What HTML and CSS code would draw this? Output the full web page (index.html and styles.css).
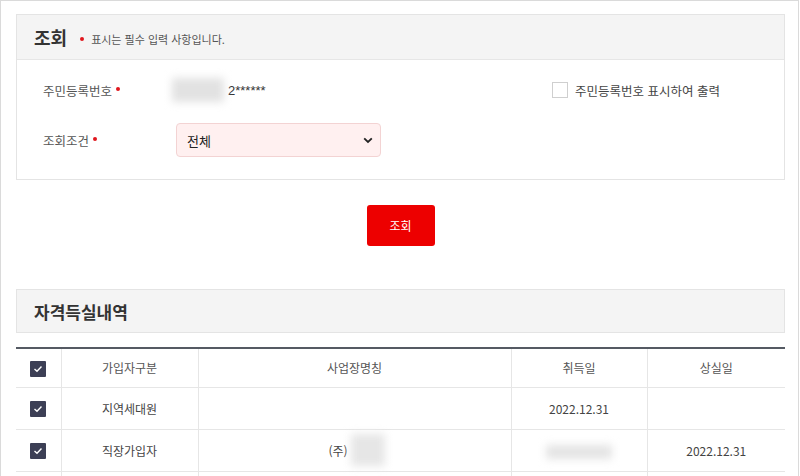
FILE: index.html
```html
<!DOCTYPE html>
<html lang="ko">
<head>
<meta charset="utf-8">
<link rel="stylesheet" href="styles.css">
</head>
<body>
<div class="frame">
  <section class="panel">
    <div class="panel-head">
      <h2 class="title">조회</h2>
      <span class="note"><span class="dot"></span>표시는 필수 입력 사항입니다.</span>
    </div>
    <div class="panel-body">
      <div class="row">
        <div class="label">주민등록번호 <span class="dot"></span></div>
        <div class="value"><span class="blur blur-id"></span><span class="id-tail">2******</span></div>
        <label class="check-group"><span class="box"></span>주민등록번호 표시하여 출력</label>
      </div>
      <div class="row">
        <div class="label">조회조건 <span class="dot"></span></div>
        <div class="value">
          <div class="select"><span>전체</span>
            <svg class="chev" width="10" height="7" viewBox="0 0 10 7"><path d="M1.2 1.3 L5 5 L8.8 1.3" fill="none" stroke="#222" stroke-width="1.8"/></svg>
          </div>
        </div>
      </div>
    </div>
  </section>

  <div class="actions"><button class="btn">조회</button></div>

  <section class="section-head"><h2 class="title title-2">자격득실내역</h2></section>

  <table class="grid">
    <colgroup>
      <col class="c1"><col class="c2"><col class="c3"><col class="c4"><col class="c5">
    </colgroup>
    <thead>
      <tr>
        <th><span class="cb"><svg width="10" height="8" viewBox="0 0 10 8"><path d="M1.5 4 L4 6.3 L8.5 1.6" fill="none" stroke="#fff" stroke-width="1.4"/></svg></span></th>
        <th>가입자구분</th>
        <th>사업장명칭</th>
        <th>취득일</th>
        <th>상실일</th>
      </tr>
    </thead>
    <tbody>
      <tr>
        <td><span class="cb"><svg width="10" height="8" viewBox="0 0 10 8"><path d="M1.5 4 L4 6.3 L8.5 1.6" fill="none" stroke="#fff" stroke-width="1.4"/></svg></span></td>
        <td>지역세대원</td>
        <td></td>
        <td>2022.12.31</td>
        <td></td>
      </tr>
      <tr>
        <td><span class="cb"><svg width="10" height="8" viewBox="0 0 10 8"><path d="M1.5 4 L4 6.3 L8.5 1.6" fill="none" stroke="#fff" stroke-width="1.4"/></svg></span></td>
        <td>직장가입자</td>
        <td><span class="corp">(주)<span class="blur blur-corp"></span></span></td>
        <td><span class="blur blur-date"></span></td>
        <td>2022.12.31</td>
      </tr>
      <tr>
        <td></td><td></td><td></td><td></td><td></td>
      </tr>
    </tbody>
  </table>
</div>
</body>
</html>
```

FILE: styles.css
```css
* { box-sizing: border-box; }
html, body { margin: 0; padding: 0; background: #fff; }
body {
  font-family: "Noto Sans CJK KR", "Noto Sans", sans-serif;
  color: #444;
  overflow: hidden;
}
.frame {
  width: 799px;
  height: 477px;
  border: 1px solid #dadada;
  padding: 13px 13px 0 15px;
  overflow: hidden;
}
.panel {
  border: 1px solid #e4e4e4;
}
.panel-head {
  height: 45px;
  background: #f4f4f4;
  border-bottom: 1px solid #e6e6e6;
  display: flex;
  align-items: center;
  padding-left: 17px;
}
.title {
  margin: 0;
  font-size: 18px;
  font-weight: 700;
  color: #333;
  line-height: 1;
}
.note {
  display: flex;
  align-items: center;
  margin-left: 13px;
  font-size: 11px;
  color: #555;
  padding-top: 3px;
}
.dot {
  display: inline-block;
  width: 4px;
  height: 4px;
  border-radius: 50%;
  background: #e0161d;
  margin-right: 7px;
  vertical-align: middle;
}
.panel-body {
  padding: 13px 0 22px;
  display: flex;
  flex-direction: column;
  gap: 16px;
}
.row {
  display: flex;
  align-items: center;
  min-height: 34px;
  padding-left: 26px;
}
.label {
  width: 133px;
  font-size: 12.5px;
  color: #555;
  display: flex;
  align-items: center;
  gap: 4px;
}
.label .dot { margin: 0; position: relative; top: -1px; }
.value {
  flex: 1;
  display: flex;
  align-items: center;
  font-size: 13px;
  color: #333;
}
.blur {
  display: inline-block;
  background: #dedede;
  filter: blur(4px);
}
.blur-id {
  width: 52px;
  height: 24px;
  margin-left: -4px;
  margin-right: 4px;
  background: #e2e2e2;
}
.id-tail {
  font-family: "Liberation Sans", Arial, sans-serif;
  font-size: 13px;
  color: #333;
}
.check-group {
  width: 232px;
  display: flex;
  align-items: center;
  gap: 7px;
  font-size: 12.5px;
  color: #444;
}
.box {
  width: 16px;
  height: 16px;
  border: 1px solid #cfcfcf;
  background: #fff;
}
.select {
  width: 205px;
  height: 34px;
  border: 1px solid #f3d3d3;
  background: #fff0f0;
  border-radius: 4px;
  display: flex;
  align-items: center;
  justify-content: space-between;
  padding: 0 7px 0 10px;
  font-size: 13px;
  color: #222;
}
.actions {
  display: flex;
  justify-content: center;
  padding-top: 25px;
}
.btn {
  width: 68px;
  height: 41px;
  border: none;
  border-radius: 3px;
  background: #ed0000;
  color: #fff;
  font-family: inherit;
  font-size: 12px;
  padding: 0;
}
.section-head {
  margin-top: 43px;
  height: 44px;
  background: #f4f4f4;
  border: 1px solid #e4e4e4;
  display: flex;
  align-items: center;
  padding-left: 17px;
}
.title-2 { font-size: 17px; }
.grid {
  margin-top: 14px;
  width: 769px;
  border-collapse: collapse;
  table-layout: fixed;
  border-top: 2px solid #555a63;
}
.c1 { width: 45px; }
.c2 { width: 137px; }
.c3 { width: 313px; }
.c4 { width: 136px; }
.c5 { width: 138px; }
.grid th, .grid td {
  border-bottom: 1px solid #e6e6e6;
  border-left: 1px solid #e6e6e6;
  text-align: center;
  font-size: 12px;
  font-weight: 400;
  color: #555;
  padding: 0;
}
.grid th:first-child, .grid td:first-child { border-left: none; }
.grid th { height: 39px; }
.grid td { height: 42px; color: #444; }
.cb {
  display: inline-flex;
  align-items: center;
  justify-content: center;
  width: 16px;
  height: 16px;
  background: #3c3f55;
  border-radius: 1px;
  vertical-align: middle;
}
.corp {
  display: inline-flex;
  align-items: center;
  margin-left: 4px;
}
.blur-corp {
  width: 34px;
  height: 32px;
  background: #e6e6e6;
  margin-left: 3px;
}
.blur-date {
  width: 66px;
  height: 14px;
  background: #e4e4e4;
  vertical-align: middle;
}
```
